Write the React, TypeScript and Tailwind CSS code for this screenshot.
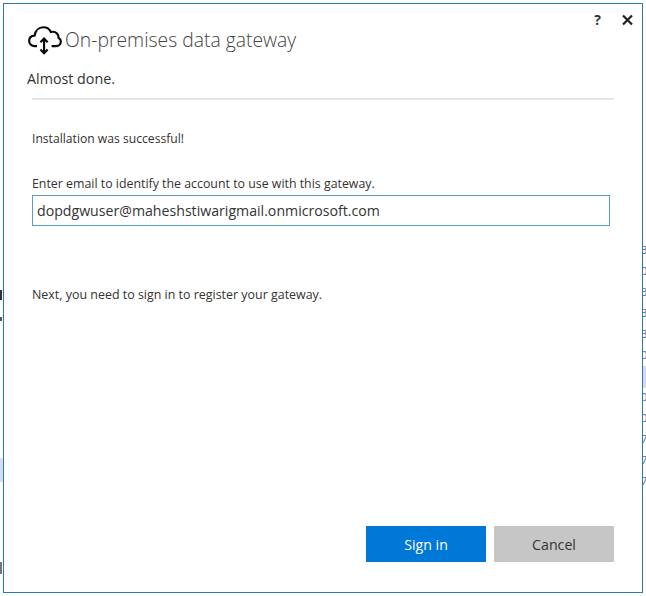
import { type ReactNode } from "react";

const FONT = "font-['Open_Sans','Noto_Sans',sans-serif]";

function CloudIcon() {
  return (
    <svg width="34" height="31" viewBox="0 0 36 32" fill="none" stroke="#0a0a0a" strokeWidth="2.3">
      <path d="M9.5 22H7C3.8 22 1.2 19.6 1.2 16.4S3.6 11 7 10.8C7.8 5.5 11.6 2 16.2 2c3.6 0 6.6 2 8 5 .7-.2 1.3-.3 2-.3 3.6 0 6.4 2.8 6.2 6.6 1.6.8 2.4 2.2 2.4 3.8 0 2.8-2.2 4.9-5 4.9H25" />
      <path d="M17 14v15" />
      <path d="M13.2 17.8L17 14l3.8 3.8" />
      <path d="M13.2 25.6L17 29.4l3.8-3.8" />
    </svg>
  );
}

function DialogButton({ children, className }: { children: ReactNode; className: string }) {
  return (
    <button className={`flex h-9 w-[120px] items-center justify-center pt-[2px] text-[14.2px] ${className}`}>
      {children}
    </button>
  );
}

export default function App() {
  return (
    <div className={`relative h-[596px] w-[646px] overflow-hidden bg-white ${FONT}`}>
      {/* bits of the window behind the dialog */}
      <div className="absolute left-[641px] top-[240px] flex flex-col gap-px text-[11px] leading-[20px] text-[#3f6ea8]">
        {["3", "0", "3", "3", "3", "0", "8", "0", "0", "7", "7", "7"].map((d, i) => (
          <span key={i}>{d}</span>
        ))}
      </div>
      <div className="absolute left-[643px] top-[366px] h-[22px] w-[3px] bg-[#d5deea]" />
      <div className="absolute left-0 top-[458px] h-6 w-[3px] bg-[#d5deea]" />
      <div className="absolute left-0 top-[290px] h-[10px] w-[2px] bg-[#333]" />
      <div className="absolute left-0 top-[317px] h-[4px] w-[2px] bg-[#555]" />
      <div className="absolute left-0 top-[562px] h-[12px] w-[2px] bg-[#777]" />
      <div className="relative m-[3px] flex h-[590px] w-[640px] flex-col border border-[#2a7ab0] bg-white">
        <div className="flex justify-end gap-[21px] pr-[9px] pt-[6px] text-[14px] font-bold leading-5 text-[#333]">
          <span>?</span>
          <svg width="11" height="20" viewBox="0 0 11 20" stroke="#222" strokeWidth="2.2">
            <path d="M1 5.5l9 9M10 5.5l-9 9" />
          </svg>
        </div>
        <div className="mt-[-6px] flex h-8 items-center pl-[24px]">
          <CloudIcon />
          <h1 className="ml-[3px] text-[19.35px] font-light leading-[30px] text-[#444]">
            On-premises data gateway
          </h1>
        </div>
        <p className="ml-[23px] mt-[13px] text-[14.3px] leading-5 text-[#333]">Almost done.</p>
        <div className="ml-[28px] mr-[28px] mt-[9px] h-[2px] bg-[#e6e6e6]" />
        <p className="ml-[28px] mt-[31px] text-[12.15px] leading-4 text-[#333]">Installation was successful!</p>
        <p className="ml-[28px] mt-[29px] text-[12.37px] leading-4 text-[#333]">
          Enter email to identify the account to use with this gateway.
        </p>
        <input
          readOnly
          value="dopdgwuser@maheshstiwarigmail.onmicrosoft.com"
          className="ml-[28px] mt-[3px] h-[31px] w-[578px] border border-[#5b9bd0] px-[4px] text-[14.15px] text-[#333] outline-none"
        />
        <p className="ml-[28px] mt-[61px] text-[12.45px] leading-4 text-[#333]">
          Next, you need to sign in to register your gateway.
        </p>
        <div className="mb-[30px] mr-[28px] mt-auto flex justify-end gap-2">
          <DialogButton className="bg-[#0078d7] text-white">Sign in</DialogButton>
          <DialogButton className="bg-[#c6c6c6] text-[#333]">Cancel</DialogButton>
        </div>
      </div>
    </div>
  );
}
